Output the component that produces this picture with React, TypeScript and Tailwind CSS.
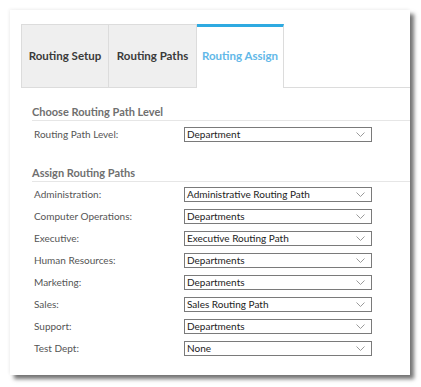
import React from 'react';

const rows: [string, string][] = [
  ['Administration:', 'Administrative Routing Path'],
  ['Computer Operations:', 'Departments'],
  ['Executive:', 'Executive Routing Path'],
  ['Human Resources:', 'Departments'],
  ['Marketing:', 'Departments'],
  ['Sales:', 'Sales Routing Path'],
  ['Support:', 'Departments'],
  ['Test Dept:', 'None'],
];

const Select: React.FC<{ value: string }> = ({ value }) => (
  <div className="w-[188px] h-[15px] border border-[#7a7a7a] bg-white flex items-center justify-between pl-[2px] pr-[6px] text-[10px] leading-none text-[#222]">
    <span>{value}</span>
    <svg width="9" height="5" viewBox="0 0 9 5" fill="none">
      <polyline points="0.5,0.5 4.5,4.5 8.5,0.5" stroke="#9a9a9a" strokeWidth="1" />
    </svg>
  </div>
);

const Row: React.FC<{ label: string; value: string }> = ({ label, value }) => (
  <div className="h-[22px] flex items-center">
    <div className="w-[152px] pl-[2px] text-[10px] text-[#555]">{label}</div>
    <Select value={value} />
  </div>
);

const Heading: React.FC<{ children: React.ReactNode }> = ({ children }) => (
  <div className="text-[11px] leading-[14px] font-bold text-[#6f6f6f] pb-[1px] border-b border-[#e6e6e6]">
    {children}
  </div>
);

export default function App() {
  return (
    <div className="w-[421px] h-[387px] bg-white pt-[10px] pl-[10px]" style={{ fontFamily: 'Lato, sans-serif' }}>
      <div className="w-[400px] h-[365px] bg-white pt-[14px] shadow-[4px_4px_4px_rgba(0,0,0,0.55),-1px_-1px_3px_rgba(0,0,0,0.06)]">
        <div className="flex pl-[11px] h-[64px]">
          <div className="w-[88px] bg-[#efefef] border border-[#dcdcdc] flex items-center justify-center text-[11.5px] font-bold text-[#3a3a3a]">
            Routing Setup
          </div>
          <div className="w-[88px] bg-[#efefef] border border-l-0 border-[#dcdcdc] flex items-center justify-center text-[11.5px] font-bold text-[#3a3a3a]">
            Routing Paths
          </div>
          <div className="w-[87px] bg-white border-t-[3px] border-t-[#2eaae1] border-r border-r-[#dcdcdc] flex items-center justify-center pb-[3px] text-[11.5px] font-bold text-[#62b8e8]">
            Routing Assign
          </div>
          <div className="flex-1 border-b border-[#dcdcdc]" />
        </div>
        <div className="pl-[22px]">
          <div className="mt-[17px]">
            <Heading>Choose Routing Path Level</Heading>
          </div>
          <div className="mt-[2px]">
            <Row label="Routing Path Level:" value="Department" />
          </div>
          <div className="mt-[21px]">
            <Heading>Assign Routing Paths</Heading>
          </div>
          <div className="mt-[1px]">
            {rows.map(([l, v]) => (
              <Row key={l} label={l} value={v} />
            ))}
          </div>
        </div>
      </div>
    </div>
  );
}
